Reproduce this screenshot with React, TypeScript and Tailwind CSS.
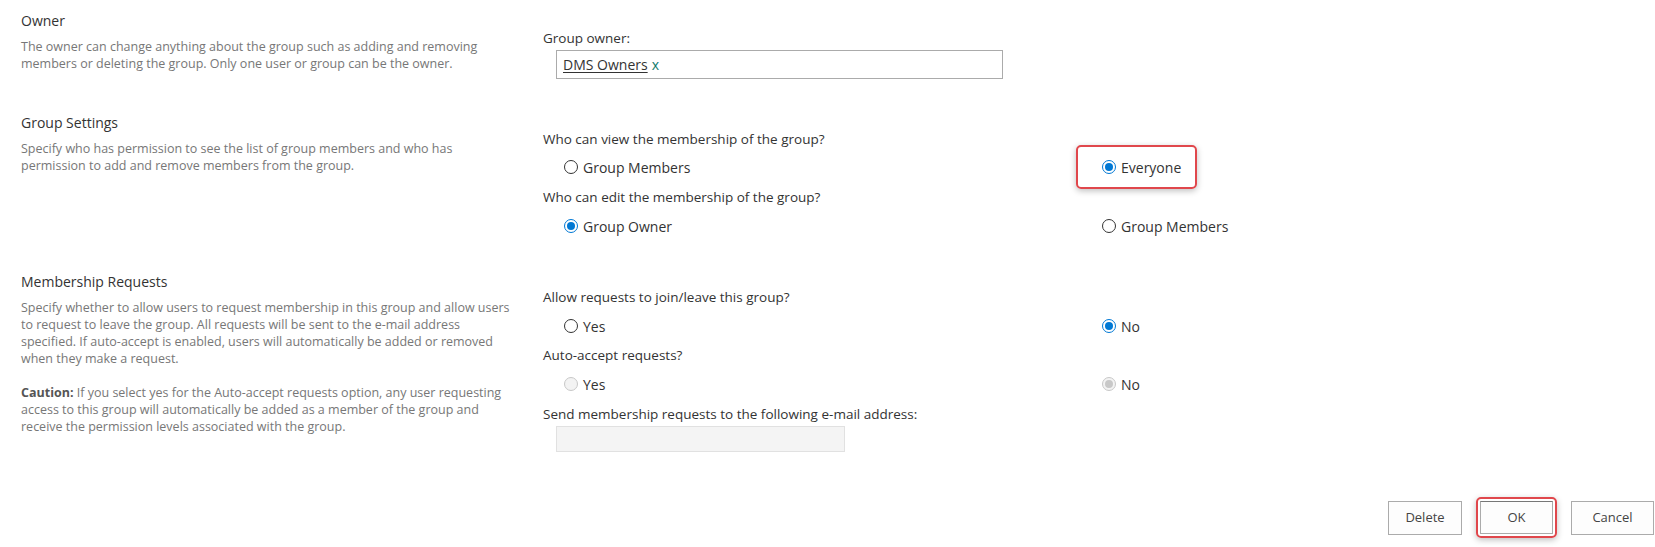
import React from 'react'

type RadioProps = {
  checked?: boolean
  disabled?: boolean
  label: string
}

function Radio({ checked, disabled, label }: RadioProps) {
  let ring = 'border-[#333333] bg-white'
  if (checked && !disabled) ring = 'border-[#0078d4] bg-white'
  if (disabled) ring = 'border-[#c8c8c8] bg-[#f3f3f3]'
  return (
    <label className="flex items-center gap-[5px] h-[20px]">
      <span
        className={`w-[14px] h-[14px] rounded-full border flex items-center justify-center ${ring}`}
      >
        {checked && (
          <span
            className={`w-[8px] h-[8px] rounded-full ${disabled ? 'bg-[#c8c8c8]' : 'bg-[#0078d4]'}`}
          />
        )}
      </span>
      <span className="text-[14px] text-[#333333]">{label}</span>
    </label>
  )
}

function Highlight({ children, className }: { children: React.ReactNode; className?: string }) {
  return (
    <div
      className={`border-2 border-[#e0474c] rounded-[5px] shadow-[0_2px_6px_rgba(0,0,0,0.25)] ${className ?? ''}`}
    >
      {children}
    </div>
  )
}

function Section({
  title,
  children,
  right,
  top,
}: {
  title: string
  children: React.ReactNode
  right: React.ReactNode
  top: string
}) {
  return (
    <div className={`flex ${top}`}>
      <div className="w-[543px] shrink-0 pl-[21px] pr-[20px]">
        <h3 className="text-[14px] leading-[20px] text-[#333333]">{title}</h3>
        <div className="mt-[7px] text-[12.5px] leading-[17px] text-[#777777]">{children}</div>
      </div>
      <div className="flex-1">{right}</div>
    </div>
  )
}

function Question({ children }: { children: React.ReactNode }) {
  return <div className="text-[13.5px] leading-[20px] h-[20px] text-[#333333]">{children}</div>
}

function OptionRow({ children }: { children: React.ReactNode }) {
  return <div className="flex items-center pl-[21px] h-[20px]">{children}</div>
}

export default function App() {
  return (
    <div
      className="w-[1655px] h-[547px] bg-white overflow-hidden relative"
      style={{ fontFamily: '"Open Sans", "Noto Sans", Arial, sans-serif' }}
    >
      <Section
        top="pt-[11px]"
        title="Owner"
        right={
          <div className="pt-[17px]">
            <Question>Group owner:</Question>
            <div className="mt-[2px] ml-[13px] w-[447px] h-[29px] border border-[#ababab] flex items-center px-[6px]">
              <span className="text-[14px] text-[#333333] underline underline-offset-2">DMS Owners</span>
              <span className="text-[14px] text-[#0f7b6c] ml-[4px]">x</span>
            </div>
          </div>
        }
      >
        The owner can change anything about the group such as adding and removing
        <br />
        members or deleting the group. Only one user or group can be the owner.
      </Section>

      <Section
        top="pt-[34px]"
        title="Group Settings"
        right={
          <div className="pt-[16px]">
            <Question>Who can view the membership of the group?</Question>
            <div className="mt-[8px] flex items-center pl-[21px] h-[20px]">
              <div className="w-[512px]">
                <Radio label="Group Members" />
              </div>
              <Highlight className="w-[121px] h-[44px] flex items-center pl-[24px]">
                <Radio checked label="Everyone" />
              </Highlight>
            </div>
            <div className="mt-[10px]">
              <Question>Who can edit the membership of the group?</Question>
            </div>
            <div className="mt-[9px]">
              <OptionRow>
                <div className="w-[538px]">
                  <Radio checked label="Group Owner" />
                </div>
                <Radio label="Group Members" />
              </OptionRow>
            </div>
          </div>
        }
      >
        Specify who has permission to see the list of group members and who has
        <br />
        permission to add and remove members from the group.
      </Section>

      <Section
        top="pt-[36px]"
        title="Membership Requests"
        right={
          <div className="pt-[15px]">
            <Question>Allow requests to join/leave this group?</Question>
            <div className="mt-[9px]">
              <OptionRow>
                <div className="w-[538px]">
                  <Radio label="Yes" />
                </div>
                <Radio checked label="No" />
              </OptionRow>
            </div>
            <div className="mt-[9px]">
              <Question>Auto-accept requests?</Question>
            </div>
            <div className="mt-[9px]">
              <OptionRow>
                <div className="w-[538px]">
                  <Radio disabled label="Yes" />
                </div>
                <Radio disabled checked label="No" />
              </OptionRow>
            </div>
            <div className="mt-[10px]">
              <Question>Send membership requests to the following e-mail address:</Question>
            </div>
            <div className="mt-[2px] ml-[13px] w-[289px] h-[26px] border border-[#e1e1e1] bg-[#f4f4f4]" />
          </div>
        }
      >
        <p>
          Specify whether to allow users to request membership in this group and allow users
          <br />
          to request to leave the group. All requests will be sent to the e-mail address
          <br />
          specified. If auto-accept is enabled, users will automatically be added or removed
          <br />
          when they make a request.
        </p>
        <p className="mt-[17px]">
          <span className="font-bold text-[#555555]">Caution:</span> If you select yes for the
          Auto-accept requests option, any user requesting
          <br />
          access to this group will automatically be added as a member of the group and
          <br />
          receive the permission levels associated with the group.
        </p>
      </Section>

      <div className="flex justify-end items-center gap-[14px] pr-[1px] mt-[45px]">
        <button className="w-[74px] h-[34px] border border-[#ababab] bg-[#fdfdfd] text-[13px] text-[#444444]">
          Delete
        </button>
        <Highlight className="p-[2px]">
          <button className="w-[73px] h-[33px] border border-[#ababab] border-t-[#777777] bg-[#fdfdfd] text-[13px] text-[#444444] block">
            OK
          </button>
        </Highlight>
        <button className="w-[83px] h-[34px] border border-[#ababab] bg-[#fdfdfd] text-[13px] text-[#444444]">
          Cancel
        </button>
      </div>
    </div>
  )
}
